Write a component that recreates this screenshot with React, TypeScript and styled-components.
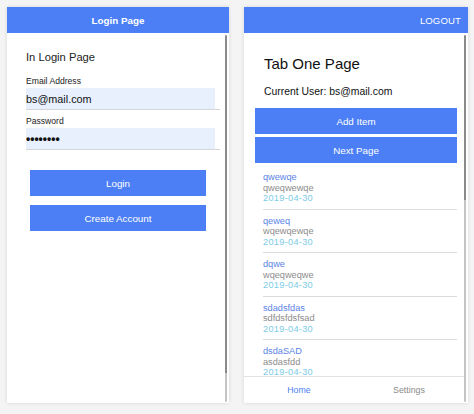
import { createGlobalStyle, styled } from "styled-components";

const GlobalStyle = createGlobalStyle`
  * {
    box-sizing: border-box;
  }
  html,
  body {
    margin: 0;
    padding: 0;
    background: #f4f4f4;
    font-family: "Liberation Sans", Arial, sans-serif;
  }
`;

const Screen = styled.div`
  display: flex;
  gap: 15px;
  padding: 7px 6px 11px 7px;
  width: 474px;
  height: 414px;
`;

const Panel = styled.div<{ $width: number }>`
  width: ${({ $width }) => $width}px;
  height: 396px;
  background: #fff;
  box-shadow: 0 0 4px rgba(0, 0, 0, 0.12);
  display: flex;
  flex-direction: column;
  overflow: hidden;
`;

const Header = styled.div<{ $align: "center" | "flex-end" }>`
  height: 26px;
  flex-shrink: 0;
  background: #4c7ff6;
  color: #fff;
  display: flex;
  align-items: center;
  justify-content: ${({ $align }) => $align};
  padding: 0 7px;
`;

const HeaderTitle = styled.span`
  font-size: 9.8px;
  font-weight: 700;
`;

const Logout = styled.span`
  font-size: 9.6px;
  letter-spacing: 0.1px;
`;

const Body = styled.div`
  flex: 1;
  display: flex;
  min-height: 0;
`;

const Content = styled.div`
  flex: 1;
  display: flex;
  flex-direction: column;
  min-width: 0;
`;

const Scrollbar = styled.div<{ $thumb: number }>`
  width: 2px;
  margin: 2px 2px 1px 0;
  border-radius: 1px;
  background: linear-gradient(
    to bottom,
    #8a8a8a 0,
    #8a8a8a ${({ $thumb }) => $thumb}%,
    #c4c4c4 ${({ $thumb }) => $thumb}%,
    #c4c4c4 100%
  );
`;

/* login page */

const LoginForm = styled.div`
  padding: 17px 0 0 19px;
  display: flex;
  flex-direction: column;
`;

const PageLabel = styled.div`
  font-size: 11.2px;
  line-height: 14px;
  color: #222;
`;

const FieldLabel = styled.div<{ $top: number }>`
  font-size: 8.6px;
  line-height: 10px;
  color: #222;
  margin-top: ${({ $top }) => $top}px;
`;

const Field = styled.div`
  width: 194px;
  margin-top: 2px;
  border-bottom: 1px solid #d6d6d6;
`;

const Input = styled.div<{ $dots?: boolean }>`
  width: 189px;
  height: 21px;
  background: #e8f0fe;
  display: flex;
  align-items: center;
  font-size: ${({ $dots }) => ($dots ? "12px" : "10.8px")};
  font-weight: ${({ $dots }) => ($dots ? 700 : 400)};
  color: #111;
`;

const ButtonStack = styled.div<{ $gap: number }>`
  display: flex;
  flex-direction: column;
  gap: ${({ $gap }) => $gap}px;
`;

const Button = styled.div`
  height: 26px;
  background: #4c7ff6;
  color: #fff;
  font-size: 9.8px;
  display: flex;
  align-items: center;
  justify-content: center;
`;

const LoginButtons = styled(ButtonStack)`
  margin: 20px 0 0 4px;
  width: 176px;
`;

/* tab one page */

const TabContent = styled.div`
  flex: 1;
  min-height: 0;
  overflow: hidden;
  padding: 22px 7px 0 11px;
  display: flex;
  flex-direction: column;
`;

const PageTitle = styled.div`
  font-size: 15px;
  line-height: 18px;
  color: #111;
  padding-left: 9px;
`;

const CurrentUser = styled.div`
  font-size: 10.4px;
  line-height: 12px;
  color: #111;
  margin-top: 13px;
  padding-left: 9px;
`;

const TabButtons = styled(ButtonStack)`
  margin-top: 10px;
`;

const List = styled.div`
  margin: 3px 0 0 8px;
  display: flex;
  flex-direction: column;
`;

const Item = styled.div`
  padding: 6px 0 5px;
  border-bottom: 1px solid #dcdcdc;
  font-size: 9.2px;
  line-height: 10.5px;
`;

const ItemTitle = styled.div`
  color: #5a83e6;
`;

const ItemText = styled.div`
  color: #8c8c8c;
`;

const ItemDate = styled.div`
  color: #7ccbe8;
  letter-spacing: 0.3px;
`;

const TabBar = styled.div`
  height: 27px;
  flex-shrink: 0;
  border-top: 1px solid #e2e2e2;
  display: flex;
`;

const Tab = styled.div<{ $active?: boolean }>`
  flex: 1;
  display: flex;
  align-items: center;
  justify-content: center;
  font-size: 8.8px;
  color: ${({ $active }) => ($active ? "#4c7ff6" : "#8a8a8a")};
`;

const items = [
  { title: "qwewqe", text: "qweqwewqe" },
  { title: "qeweq", text: "wqewqewqe" },
  { title: "dqwe", text: "wqeqweqwe" },
  { title: "sdadsfdas", text: "sdfdsfdsfsad" },
  { title: "dsdaSAD", text: "asdasfdd" },
];

function App() {
  return (
    <>
      <GlobalStyle />
      <Screen>
        <Panel $width={222}>
          <Header $align="center">
            <HeaderTitle>Login Page</HeaderTitle>
          </Header>
          <Body>
            <Content>
              <LoginForm>
                <PageLabel>In Login Page</PageLabel>
                <FieldLabel $top={12}>Email Address</FieldLabel>
                <Field>
                  <Input>bs@mail.com</Input>
                </Field>
                <FieldLabel $top={6}>Password</FieldLabel>
                <Field>
                  <Input $dots>••••••••</Input>
                </Field>
                <LoginButtons $gap={9}>
                  <Button>Login</Button>
                  <Button>Create Account</Button>
                </LoginButtons>
              </LoginForm>
            </Content>
            <Scrollbar $thumb={92} />
          </Body>
        </Panel>
        <Panel $width={224}>
          <Header $align="flex-end">
            <Logout>LOGOUT</Logout>
          </Header>
          <Body>
            <Content>
              <TabContent>
                <PageTitle>Tab One Page</PageTitle>
                <CurrentUser>Current User: bs@mail.com</CurrentUser>
                <TabButtons $gap={3}>
                  <Button>Add Item</Button>
                  <Button>Next Page</Button>
                </TabButtons>
                <List>
                  {items.map((e, i) => (
                    <Item key={i}>
                      <ItemTitle>{e.title}</ItemTitle>
                      <ItemText>{e.text}</ItemText>
                      <ItemDate>2019-04-30</ItemDate>
                    </Item>
                  ))}
                </List>
              </TabContent>
              <TabBar>
                <Tab $active>Home</Tab>
                <Tab>Settings</Tab>
              </TabBar>
            </Content>
            <Scrollbar $thumb={45} />
          </Body>
        </Panel>
      </Screen>
    </>
  );
}

export default App;
